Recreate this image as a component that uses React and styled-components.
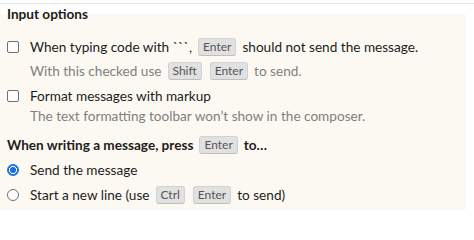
import React from "react";
import styled, { createGlobalStyle } from "styled-components";

const GlobalStyle = createGlobalStyle`
  html, body {
    margin: 0;
    background: #ffffff;
  }
  body {
    font-family: Lato, "Noto Sans", sans-serif;
    color: #1d1c1d;
    -webkit-font-smoothing: antialiased;
  }
`;

const Page = styled.div`
  margin-top: 3px;
  border-top: 1px solid #e6e6e6;
`;

const Panel = styled.section`
  width: 466px;
  min-height: 206px;
  box-sizing: border-box;
  padding-left: 7px;
  background: linear-gradient(to bottom, #ffffff 10px, #fcf9f2 10px);
`;

const Heading = styled.div`
  font-size: 13.6px;
  font-weight: 700;
  line-height: 20px;
  margin-top: ${(p) => p.$top || 0}px;
  display: flex;
  align-items: center;
  min-height: 20px;
  white-space: pre;
`;

const OptionList = styled.div`
  display: flex;
  flex-direction: column;
  gap: 3px;
  margin-top: ${(p) => p.$top || 0}px;
`;

const Option = styled.label`
  display: flex;
  flex-direction: column;
`;

const Line = styled.div`
  display: flex;
  align-items: center;
  min-height: 20px;
  font-size: 13.6px;
  line-height: 20px;
  white-space: pre;
  color: ${(p) => (p.$hint ? "#7f7f7f" : "#1d1c1d")};
  padding-left: ${(p) => (p.$hint ? 23 : 0)}px;
`;

const Checkbox = styled.input.attrs({ type: "checkbox" })`
  appearance: none;
  margin: 0 11px 0 0;
  width: 12px;
  height: 12px;
  box-sizing: border-box;
  border: 1px solid #6f6f6f;
  border-radius: 2px;
  background: #ffffff;
`;

const Radio = styled.input.attrs({ type: "radio" })`
  appearance: none;
  margin: 0 11px 0 0;
  width: 12px;
  height: 12px;
  box-sizing: border-box;
  border-radius: 50%;
  border: 1px solid ${(p) => (p.checked ? "#1a6fe3" : "#6f6f6f")};
  background: ${(p) =>
    p.checked
      ? "radial-gradient(circle, #1a6fe3 0 2.8px, #ffffff 3.3px 3.8px, #1a6fe3 4.3px)"
      : "#ffffff"};
`;

const Kbd = styled.kbd`
  display: inline-flex;
  align-items: center;
  height: 18px;
  margin: 3px 6px;
  padding: 0 4px;
  box-sizing: border-box;
  border-radius: 3px;
  border: 1px solid #d2d2d2;
  border-bottom-color: #bfbfbf;
  background: #e1e1e1;
  color: #555555;
  font-family: Lato, "Noto Sans", sans-serif;
  font-weight: 400;
  font-size: 12px;
  line-height: 1;

  & + & {
    margin-left: 2px;
  }
`;

export default function App() {
  return (
    <>
      <GlobalStyle />
      <Page>
        <Panel>
          <Heading>Input options</Heading>
          <OptionList $top={11}>
            <Option>
              <Line>
                <Checkbox />
                When typing code with ```,
                <Kbd>Enter</Kbd>
                should not send the message.
              </Line>
              <Line $hint>
                With this checked use
                <Kbd>Shift</Kbd>
                <Kbd>Enter</Kbd>
                to send.
              </Line>
            </Option>
            <Option>
              <Line>
                <Checkbox />
                Format messages with markup
              </Line>
              <Line $hint>The text formatting toolbar won’t show in the composer.</Line>
            </Option>
          </OptionList>
          <Heading $top={7}>
            When writing a message, press
            <Kbd>Enter</Kbd>
            to…
          </Heading>
          <OptionList $top={3}>
            <Option>
              <Line>
                <Radio name="enter" checked readOnly />
                Send the message
              </Line>
            </Option>
            <Option>
              <Line>
                <Radio name="enter" checked={false} readOnly />
                Start a new line (use
                <Kbd>Ctrl</Kbd>
                <Kbd>Enter</Kbd>
                to send)
              </Line>
            </Option>
          </OptionList>
        </Panel>
      </Page>
    </>
  );
}
